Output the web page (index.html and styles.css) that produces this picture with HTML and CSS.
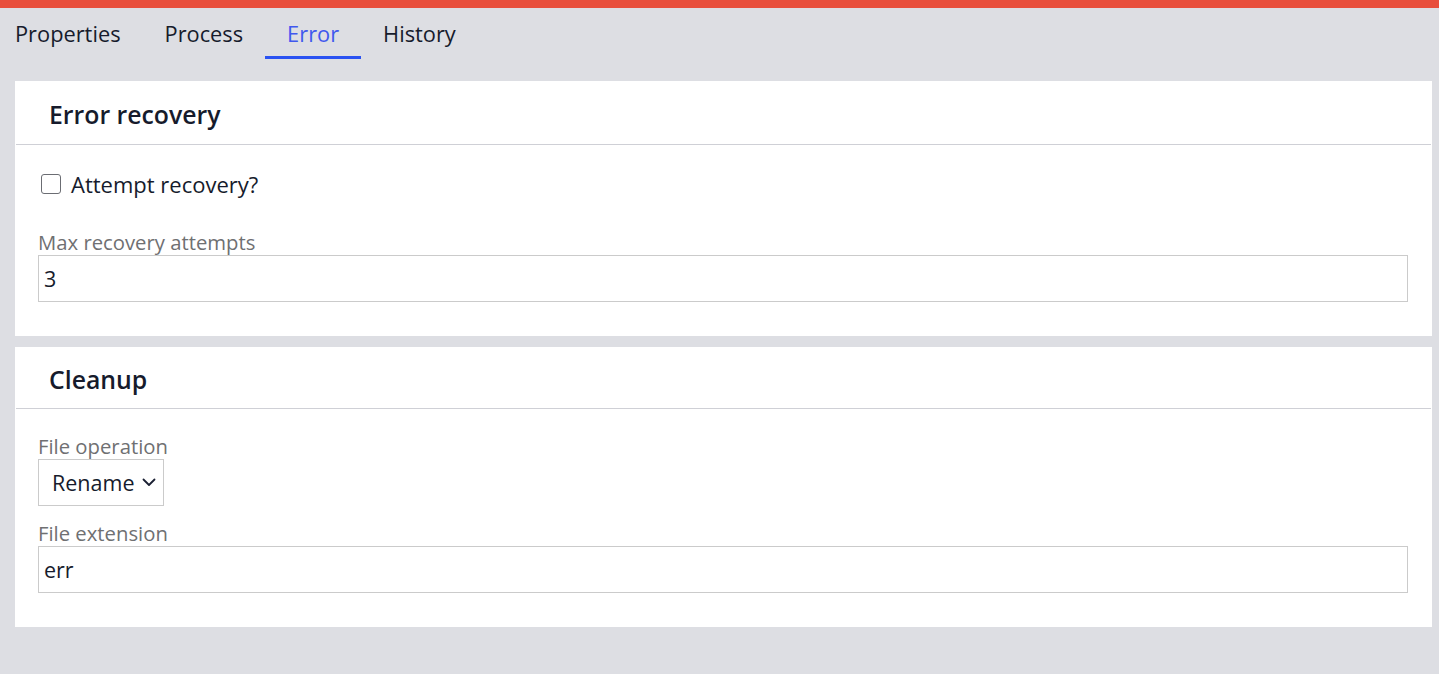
FILE: index.html
```html
<!DOCTYPE html>
<html lang="en">
<head>
<meta charset="utf-8">
<title>Error</title>
<link rel="stylesheet" href="styles.css">
</head>
<body>
<div class="topbar"></div>
<main class="page">
  <nav class="tabs">
    <div class="tab">Properties</div>
    <div class="tab">Process</div>
    <div class="tab active">Error</div>
    <div class="tab">History</div>
  </nav>
  <section class="card">
    <h2 class="card-title">Error recovery</h2>
    <div class="card-body first">
      <label class="check-row"><span class="checkbox"></span><span>Attempt recovery?</span></label>
      <div class="field spaced">
        <div class="label">Max recovery attempts</div>
        <div class="input">3</div>
      </div>
    </div>
  </section>
  <section class="card second">
    <h2 class="card-title">Cleanup</h2>
    <div class="card-body">
      <div class="field">
        <div class="label">File operation</div>
        <div class="select">Rename
          <svg class="chev" width="14" height="9" viewBox="0 0 14 9"><path d="M1.5 1.5 L7 7 L12.5 1.5" fill="none" stroke="#1b2033" stroke-width="1.8" stroke-linecap="round" stroke-linejoin="round"/></svg>
        </div>
      </div>
      <div class="field next">
        <div class="label">File extension</div>
        <div class="input">err</div>
      </div>
    </div>
  </section>
</main>
</body>
</html>
```
FILE: styles.css
```css
* { box-sizing: border-box; }
html, body { margin: 0; padding: 0; }
body {
  background: #dddee3;
  font-family: "Open Sans", "Noto Sans", sans-serif;
  color: #161b2c;
  height: 674px;
  overflow: hidden;
}
.topbar { height: 8px; background: #e84e3c; }
.page { padding: 0 7px 0 15px; }
.tabs { display: flex; height: 51px; margin-bottom: 22px; }
.tab {
  padding: 2px 22px 0;
  font-size: 21.8px;
  display: flex;
  align-items: center;
  border-bottom: 3px solid transparent;
}
.tab:first-child { padding-left: 0; }
.tab.active { color: #4058ee; border-bottom-color: #2a52f2; }
.card {
  background: #fff;
  margin-bottom: 11px;
}
.card-title {
  margin: 0 1px;
  font-size: 24.8px;
  font-weight: 600;
  padding: 2px 33px 0;
  height: 64px;
  display: flex;
  align-items: center;
  border-bottom: 1px solid #cfd0d6;
}
.second .card-title { height: 62px; }
.card-body { padding: 24px 24px 34px 23px; }
.card-body.first { padding-top: 26px; padding-bottom: 34px; }
.check-row {
  display: flex;
  align-items: center;
  height: 26px;
  font-size: 22px;
  padding-left: 3px;
}
.checkbox {
  width: 20px; height: 20px;
  border: 1.5px solid #6b6d73;
  border-radius: 3px;
  margin-right: 10px;
  flex: none;
}
.field.spaced { margin-top: 32px; }
.field.next { margin-top: 14px; }
.label {
  font-size: 20.3px;
  color: #6f7072;
  height: 26px;
  line-height: 26px;
}
.input {
  height: 47px;
  border: 1px solid #cbcbcb;
  font-size: 21.5px;
  padding: 0 5px;
  display: flex;
  align-items: center;
}
.select {
  display: inline-flex;
  align-items: center;
  height: 47px;
  border: 1px solid #cbcbcb;
  font-size: 21.5px;
  padding: 0 6px 0 13px;
  width: 126px;
}
.chev { margin-left: 8px; }
```
